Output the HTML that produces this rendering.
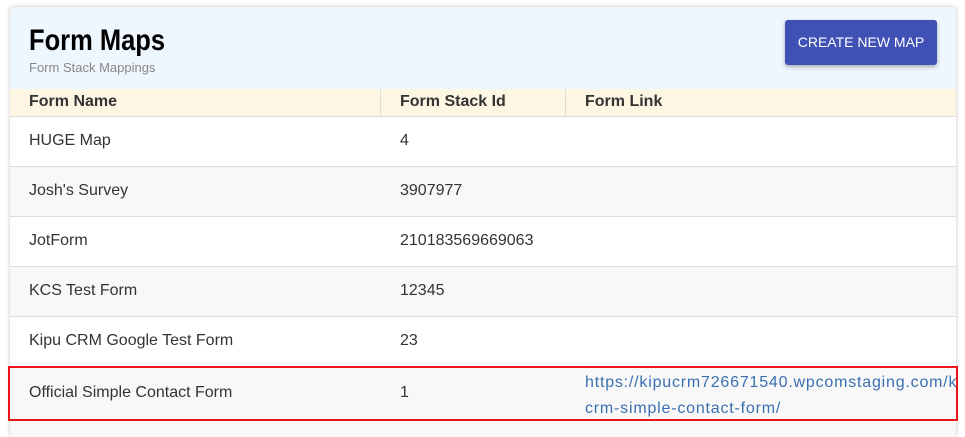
<!DOCTYPE html>
<html><head><meta charset="utf-8"><style>
body{margin:0;width:965px;height:427px;background:#fff;font-family:"Liberation Sans",sans-serif;overflow:hidden;position:relative}
.card{position:absolute;left:10px;top:7px;width:946px;height:430px;border-radius:4px;box-shadow:0 0 4px rgba(0,0,0,.25);background:#fff;overflow:hidden}
.hd{position:absolute;left:0;top:0;width:946px;height:82px;background:#eef6fe}
h1{position:absolute;left:19px;top:17px;margin:0;font-weight:bold;font-size:30px;color:#000;transform:scaleX(0.85);transform-origin:0 0}
.sub{position:absolute;left:19px;top:53px;font-size:13px;color:#888}
.btn{position:absolute;left:775px;top:13px;width:152px;height:45px;background:#3f51b5;border-radius:3px;color:#fff;font-size:14px;line-height:45px;text-align:center;box-shadow:0 2px 4px rgba(0,0,0,.3)}
.th{position:absolute;left:0;top:82px;width:946px;height:27px;background:#fdf6e3;border-bottom:1px solid #ddd}
.th span{position:absolute;top:4px;font-weight:bold;font-size:16px;color:#333}
.sep{position:absolute;top:0;width:1px;height:27px;background:#ddd}
.row{position:absolute;left:0;width:946px;height:49px;border-bottom:1px solid #ddd;font-size:16px;color:#333}
.row span{position:absolute;top:15px}
.g{background:#f8f8f8}
a{color:#3a6fb0;text-decoration:none}
.red{position:absolute;left:8px;top:366px;width:946px;height:51px;border:2px solid #e8151b}
</style></head><body>
<div class="card">
<div class="hd"><h1>Form Maps</h1><div class="sub">Form Stack Mappings</div><div class="btn">CREATE NEW MAP</div></div>
<div class="th"><span style="left:19px">Form Name</span><div class="sep" style="left:370px"></div><span style="left:390px">Form Stack Id</span><div class="sep" style="left:555px"></div><span style="left:575px">Form Link</span></div>
<div class="row" style="top:110px"><span style="left:19px">HUGE Map</span><span style="left:390px">4</span></div>
<div class="row g" style="top:160px"><span style="left:19px">Josh's Survey</span><span style="left:390px">3907977</span></div>
<div class="row" style="top:210px"><span style="left:19px">JotForm</span><span style="left:390px">210183569669063</span></div>
<div class="row g" style="top:260px"><span style="left:19px">KCS Test Form</span><span style="left:390px">12345</span></div>
<div class="row" style="top:310px"><span style="left:19px">Kipu CRM Google Test Form</span><span style="left:390px">23</span></div>
<div class="row g" style="top:360px;height:70px;border-bottom:none"><span style="left:19px;top:17px">Official Simple Contact Form</span><span style="left:390px;top:17px">1</span><span style="left:575px;top:3px;line-height:26px;white-space:nowrap;font-size:16px;letter-spacing:0.8px"><a>https://kipucrm726671540.wpcomstaging.com/k</a><br><a>crm-simple-contact-form/</a></span></div>
</div>
<div class="red"></div>
</body></html>
